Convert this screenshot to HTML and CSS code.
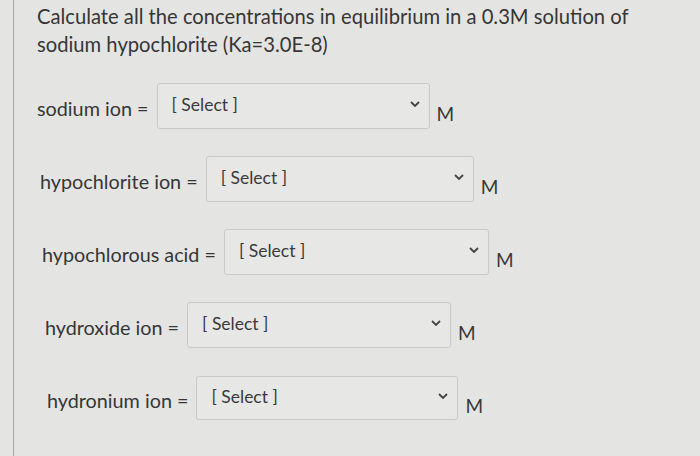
FILE: index.html
```html
<!DOCTYPE html>
<html>
<head>
<meta charset="utf-8">
<link rel="stylesheet" href="styles.css">
</head>
<body>
<div class="panel">
  <p class="question">Calculate all the concentrations in equilibrium in a 0.3M solution of sodium hypochlorite (Ka=3.0E-8)</p>
  <div class="rows">
    <div class="row r1">
      <span class="label">sodium ion =</span>
      <div class="select s1"><span class="sel-text">[ Select ]</span><svg class="chev" viewBox="0 0 10 6" width="10" height="6"><path d="M1 1 L5 5 L9 1" fill="none" stroke="#444" stroke-width="1.8"/></svg></div>
      <span class="unit">M</span>
    </div>
    <div class="row r2">
      <span class="label">hypochlorite ion =</span>
      <div class="select s2"><span class="sel-text">[ Select ]</span><svg class="chev" viewBox="0 0 10 6" width="10" height="6"><path d="M1 1 L5 5 L9 1" fill="none" stroke="#444" stroke-width="1.8"/></svg></div>
      <span class="unit">M</span>
    </div>
    <div class="row r3">
      <span class="label">hypochlorous acid =</span>
      <div class="select s3"><span class="sel-text">[ Select ]</span><svg class="chev" viewBox="0 0 10 6" width="10" height="6"><path d="M1 1 L5 5 L9 1" fill="none" stroke="#444" stroke-width="1.8"/></svg></div>
      <span class="unit">M</span>
    </div>
    <div class="row r4">
      <span class="label">hydroxide ion =</span>
      <div class="select s4"><span class="sel-text">[ Select ]</span><svg class="chev" viewBox="0 0 10 6" width="10" height="6"><path d="M1 1 L5 5 L9 1" fill="none" stroke="#444" stroke-width="1.8"/></svg></div>
      <span class="unit">M</span>
    </div>
    <div class="row r5">
      <span class="label">hydronium ion =</span>
      <div class="select s5"><span class="sel-text">[ Select ]</span><svg class="chev" viewBox="0 0 10 6" width="10" height="6"><path d="M1 1 L5 5 L9 1" fill="none" stroke="#444" stroke-width="1.8"/></svg></div>
      <span class="unit">M</span>
    </div>
  </div>
</div>
</body>
</html>
```
FILE: styles.css
```css
html, body {
  margin: 0;
  padding: 0;
}
body {
  background: #e4e5e3;
  font-family: Lato, "Open Sans", sans-serif;
  color: #363636;
  width: 700px;
  height: 456px;
  overflow: hidden;
}
.panel {
  margin-left: 13px;
  border-left: 1px solid #a8a8a8;
  height: 456px;
  padding-left: 23px;
  box-sizing: border-box;
}
.question {
  margin: 0;
  padding-top: 2px;
  font-size: 20.2px;
  line-height: 28px;
  width: 620px;
}
.rows {
  display: flex;
  flex-direction: column;
  gap: 27px;
  margin-top: 25px;
}
.row {
  display: flex;
  align-items: center;
  height: 46px;
}
.r2 { padding-left: 3px; }
.r3 { padding-left: 5px; }
.r4 { padding-left: 8px; }
.r5 { padding-left: 10px; }
.r5 .select { height: 44px; }
.label {
  font-size: 19.8px;
  padding-top: 4px;
  margin-right: 8px;
  white-space: nowrap;
}
.select {
  height: 46px;
  box-sizing: border-box;
  border: 1px solid #c9cac8;
  border-radius: 3px;
  background: #e7e8e6;
  display: flex;
  align-items: center;
  padding: 0 9px 0 14px;
  justify-content: space-between;
}
.s1 { width: 273px; }
.s2 { width: 268px; }
.s3 { width: 265px; }
.s4 { width: 264px; }
.s5 { width: 262px; }
.sel-text {
  font-size: 17.5px;
  color: #3a3a3a;
  padding-bottom: 4px;
}
.chev {
  margin-bottom: 4px;
}
.unit {
  font-size: 19px;
  margin-left: 7px;
  padding-top: 14px;
  color: #383838;
}
```
